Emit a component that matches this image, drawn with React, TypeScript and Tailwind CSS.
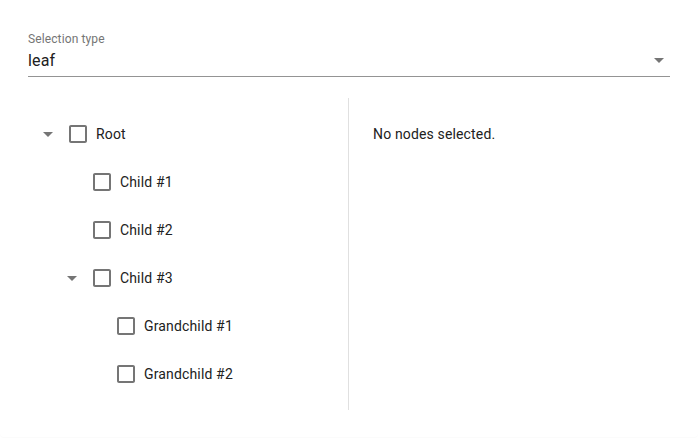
import React from 'react';

type Node = { label: string; depth: number; expandable?: boolean };

const nodes: Node[] = [
  { label: 'Root', depth: 0, expandable: true },
  { label: 'Child #1', depth: 1 },
  { label: 'Child #2', depth: 1 },
  { label: 'Child #3', depth: 1, expandable: true },
  { label: 'Grandchild #1', depth: 2 },
  { label: 'Grandchild #2', depth: 2 },
];

const ArrowDrop: React.FC<{ className?: string }> = ({ className }) => (
  <svg viewBox="0 0 24 24" className={className} fill="currentColor">
    <path d="M7 10l5 5 5-5z" />
  </svg>
);

const Box: React.FC = () => (
  <svg viewBox="0 0 24 24" className="w-6 h-6 text-[#757575]" fill="currentColor">
    <path d="M19 5v14H5V5h14m0-2H5c-1.1 0-2 .9-2 2v14c0 1.1.9 2 2 2h14c1.1 0 2-.9 2-2V5c0-1.1-.9-2-2-2z" />
  </svg>
);

const TreeRow: React.FC<{ node: Node }> = ({ node }) => {
  const indent = ['pl-0', 'pl-6', 'pl-12'][node.depth];
  return (
    <div className={`h-12 flex items-center ${indent}`}>
      <div className="w-6 h-6 flex items-center justify-center text-[#757575]">
        {node.expandable && <ArrowDrop className="w-6 h-6" />}
      </div>
      <div className="ml-[6px]">
        <Box />
      </div>
      <span className="ml-[6px] text-[14px] tracking-[0.01071em] text-[#212121]">{node.label}</span>
    </div>
  );
};

export default function App() {
  return (
    <div className="w-[698px] h-[438px] bg-white" style={{ fontFamily: 'Roboto, "Liberation Sans", sans-serif' }}>
      <div className="h-[437px] bg-white rounded shadow-[0_1px_1px_rgba(0,0,0,0.02)] px-7 pt-[31px]">
        <div className="border-b border-[#949494] pb-[4px]">
          <div className="text-[12px] leading-[16px] tracking-[0.00938em] text-[#757575]">Selection type</div>
          <div className="flex items-center justify-between h-[25px]">
            <span className="mt-[2px] text-[16px] tracking-[0.00938em] text-[#212121]">leaf</span>
            <ArrowDrop className="w-6 h-6 -mr-[1px] text-[#757575]" />
          </div>
        </div>
        <div className="flex mt-[21px]">
          <div className="w-[321px] border-r border-[#e0e0e0] pl-2 py-3">
            {nodes.map((n) => (
              <TreeRow key={n.label} node={n} />
            ))}
          </div>
          <div className="flex-1 pl-6 pt-[26px] text-[14px] tracking-[0.01071em] text-[#212121]">No nodes selected.</div>
        </div>
      </div>
    </div>
  );
}
